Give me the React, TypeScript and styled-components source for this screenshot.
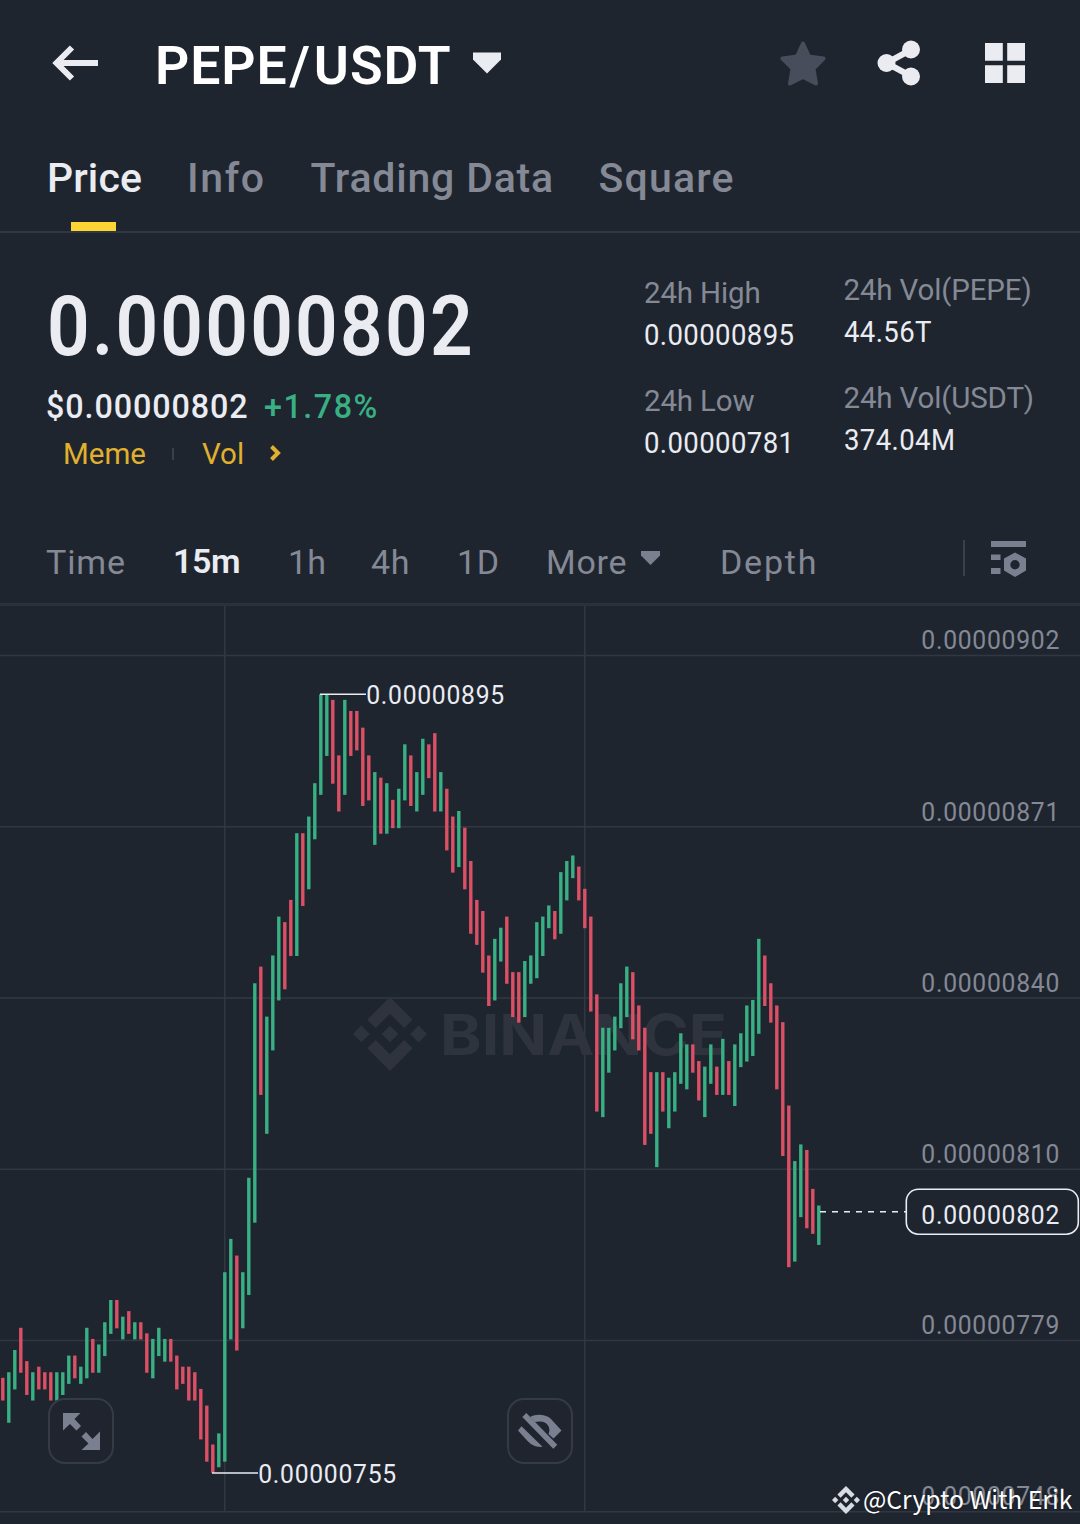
import React from 'react';
import styled, { createGlobalStyle } from 'styled-components';

const color = {
  bg: '#1f252f',
  line: '#323843',
  text: '#eaecf2',
  muted: '#848995',
  icon: '#7a808f',
  yellow: '#fcd535',
  gold: '#e0b02e',
  up: '#39b084',
  down: '#dc5066',
};

const GlobalStyle = createGlobalStyle`
  body {
    margin: 0;
    background: ${color.bg};
    font-family: Roboto, "Liberation Sans", sans-serif;
  }
`;

const Screen = styled.main`
  position: relative;
  width: 1080px;
  height: 1524px;
  overflow: hidden;
  background: ${color.bg};
  color: ${color.text};
`;

const Header = styled.header`
  display: flex;
  align-items: center;
  box-sizing: border-box;
  height: 126px;
  padding: 0 55px 0 52px;
`;

const Pair = styled.h1`
  width: 318px;
  margin: 5px 0 0 57px;
  font-size: 53.5px;
  line-height: 60px;
  font-weight: 600;
  letter-spacing: 0.9px;
  color: #fff;
  white-space: nowrap;
`;

const Slash = styled.span`
  margin: 0 3px 0 2px;
`;

const HeaderActions = styled.div`
  display: flex;
  align-items: center;
  margin-left: auto;
`;

const Star = styled.svg`
  margin-right: 51px;
`;

const Share = styled.svg`
  margin-right: 64px;
`;

const Tabs = styled.nav`
  display: flex;
  height: 105px;
  padding-left: 47px;
  border-bottom: 2px solid ${color.line};
`;

const Tab = styled.div<{ $active?: boolean; $width: number; $ls: number }>`
  display: flex;
  flex-direction: column;
  justify-content: space-between;
  box-sizing: border-box;
  width: ${(p) => p.$width}px;
  height: 105px;
  padding-top: 31px;
  font-size: 41px;
  line-height: 42px;
  font-weight: 500;
  letter-spacing: ${(p) => p.$ls}px;
  white-space: nowrap;
  color: ${(p) => (p.$active ? color.text : color.muted)};
`;

const Underline = styled.i`
  width: 45px;
  height: 9px;
  margin-left: 24px;
  background: ${color.yellow};
`;

const Summary = styled.section`
  display: flex;
  height: 286px;
`;

const PriceColumn = styled.div`
  box-sizing: border-box;
  width: 644px;
  padding: 49px 0 0 46px;
`;

/* Figures are set slightly condensed, with the tracking opened up to compensate. */
const Figure = styled.span<{ $ls: number; $squeeze?: number }>`
  display: inline-block;
  transform: scaleX(${(p) => p.$squeeze ?? 0.95});
  transform-origin: left center;
  letter-spacing: ${(p) => p.$ls}px;
  white-space: nowrap;
`;

const BigPrice = styled.div`
  height: 90px;
  padding-left: 1px;
  font-size: 83px;
  line-height: 90px;
  font-weight: 600;
`;

const SubPrice = styled.div`
  display: flex;
  height: 40px;
  margin-top: 15px;
  font-size: 34px;
  line-height: 39px;
  font-weight: 500;
`;

const Fiat = styled.span`
  width: 218px;
`;

const Change = styled.span`
  color: ${color.up};
`;

const TagRow = styled.div`
  display: flex;
  align-items: center;
  height: 36px;
  margin-top: 9px;
  padding-left: 17px;
  font-size: 29.5px;
  line-height: 36px;
  color: ${color.gold};
`;

const Tag = styled.span<{ $width: number }>`
  width: ${(p) => p.$width}px;
`;

const TagDivider = styled.i`
  width: 2px;
  height: 12px;
  margin: 0 28px 0 27px;
  background: #3a404b;
`;

const Chevron = styled.svg`
  margin-left: 24px;
`;

const StatColumn = styled.dl<{ $top: number; $width: number }>`
  width: ${(p) => p.$width}px;
  margin: ${(p) => p.$top}px 0 0;
`;

const StatLabel = styled.dt`
  font-size: 29.5px;
  line-height: 36px;
  letter-spacing: -0.15px;
  white-space: nowrap;
  color: ${color.muted};
`;

const StatValue = styled.dd`
  height: 36px;
  margin: 6px 0 30px;
  font-size: 29px;
  line-height: 36px;
`;

const Intervals = styled.nav`
  display: flex;
  align-items: center;
  height: 84px;
  padding-left: 46px;
  border-bottom: 3px solid #2b313b;
`;

const Interval = styled.span<{ $width: number; $active?: boolean; $ls?: number }>`
  display: flex;
  align-items: center;
  width: ${(p) => p.$width}px;
  height: 40px;
  padding-top: ${(p) => (p.$active ? 0 : 1)}px;
  font-size: 34px;
  line-height: 40px;
  font-weight: ${(p) => (p.$active ? 600 : 400)};
  letter-spacing: ${(p) => p.$ls ?? 0.7}px;
  color: ${(p) => (p.$active ? color.text : color.muted)};
`;

const SmallCaret = styled.svg`
  margin: -8px 0 0 14px;
`;

const IntervalDivider = styled.i`
  width: 2px;
  height: 36px;
  margin: -6px 26px 0 0;
  background: #3a404b;
`;

const SettingsIcon = styled.svg`
  margin-top: -4px;
`;

const ChartArea = styled.section`
  position: relative;
  height: 918px;
`;

const ChartSvg = styled.svg`
  display: block;
  font-family: Roboto, "Liberation Sans", sans-serif;
  font-size: 26.3px;
`;

const ChartButton = styled.button<{ $left: number }>`
  position: absolute;
  left: ${(p) => p.$left}px;
  top: 792px;
  display: flex;
  align-items: center;
  justify-content: center;
  width: 66px;
  height: 66px;
  padding: 0;
  border: 2.5px solid #353b46;
  border-radius: 17px;
  background: rgba(31, 37, 47, 0.9);
`;

const Credit = styled.div`
  position: absolute;
  left: 832px;
  bottom: 6px;
  display: flex;
  align-items: center;
  gap: 3px;
  height: 36px;
  font-family: "Noto Sans CJK SC", "Noto Sans", sans-serif;
  font-size: 24.7px;
  line-height: 32px;
  color: #fff;
  white-space: nowrap;
  text-shadow: 0 0 2px rgba(0, 0, 0, 0.45);
`;

const CreditName = styled.span`
  height: 36px;
`;

/* Each entry: direction (u/d), then high and low as ticks below the day's peak. */
const SERIES = `
d123,127 u122,131 u118,125 d114,122 d120,126 u122,127 d121,125 d122,125 d122,127 u122,127
u122,126 u119,124 d119,123 u121,124 u114,123 d116,122 u117,122 u113,119 u109,115 d109,114
u112,116 d111,115 u113,116 d113,116 d115,122 u116,123 u114,119 u116,120 d116,120 d119,125
d121,124 d121,127 d122,127 d125,134 d128,138 d135,140 u133,139 u104,138 u98,116 d101,118
u104,114 u87,108 u52,95 d49,72 u58,79 u47,64 u40,55 d41,53 d37,47 u25,47
d25,38 u22,35 u16,26 u0,18 u0,11 d1,16 d11,21 u1,18 d3,11 d3,10
d6,20 d11,19 u14,27 d15,25 u16,25 d19,24 u17,24 u9,19 d11,20 u14,21
u8,18 d9,15 d7,21 u14,21 d17,28 d22,32 u21,31 d24,35 d30,43 d37,45
d39,50 d47,56 u44,55 u42,48 d40,52 d50,58 d50,59 u48,58 u47,52 u41,51
u40,47 u38,42 d39,44 u32,43 u30,37 u29,33 d31,37 d35,42 d40,57 d54,75
u60,76 u60,68 u58,64 u52,60 u49,58 d50,62 d56,64 d60,81 d68,79 u68,85
d68,75 u69,78 u68,75 u61,70 u63,71 d63,68 d66,73 u67,76 u63,70 d67,72
u62,72 d66,72 u63,74 u61,67 u56,66 u55,65 u44,61 d47,56 d52,59 d56,71
d59,83 d74,103 u84,102 u81,94 d82,96 d89,97 u92,99
`;

const TICK = 5.557;
const PEAK_Y = 694.3;

const candles = SERIES.trim()
  .split(/\s+/)
  .map((entry, index) => {
    const [high, low] = entry.slice(1).split(',').map(Number);
    return {
      x: 2.8 + index * 6,
      top: PEAK_Y + high * TICK,
      bottom: PEAK_Y + low * TICK + 0.5,
      up: entry[0] === 'u',
    };
  });

const axis = ['0.00000902', '0.00000871', '0.00000840', '0.00000810', '0.00000779', '0.00000748'];

const BinanceMark = ({ size, fill }: { size: number; fill: string }) => (
  <svg width={size} height={size} viewBox="0 0 24 24" fill={fill}>
    <path d="M16.624 13.9202l2.7175 2.7154-7.353 7.353-7.353-7.352 2.7175-2.7164 4.6355 4.6595 4.6356-4.6595zm4.6366-4.6366L24 12l-2.7154 2.7164L18.5682 12l2.6924-2.7164zm-9.272.001l2.7163 2.6914-2.7164 2.7174v-.001L9.2721 12l2.7164-2.7154zm-9.2722-.001L5.4088 12l-2.6914 2.6924L0 12l2.7164-2.7164zM11.9885.0115l7.353 7.329-2.7174 2.7154-4.6356-4.6356-4.6355 4.6595-2.7174-2.7154 7.353-7.353z" />
  </svg>
);

const ChartFigure = ({ x, y, children }: { x: number; y: number; children: string }) => (
  <text transform={`translate(${x} ${y}) scale(0.94 1)`} textLength={138 / 0.94}>
    {children}
  </text>
);

const Chart = () => (
  <ChartSvg width="1080" height="918" viewBox="0 606 1080 918">
    <g stroke={color.line} strokeWidth="1.5">
      {axis.map((label, i) => (
        <line key={label} x1="0" x2="1080" y1={655.5 + i * 171.25} y2={655.5 + i * 171.25} />
      ))}
      <line x1="224.7" x2="224.7" y1="606" y2="1512" />
      <line x1="584.7" x2="584.7" y1="606" y2="1512" />
    </g>
    <g>
      <svg x="353" y="997" width="74" height="74" viewBox="0 0 74 74">
        <BinanceMark size={74} fill="#2e333d" />
      </svg>
      <text
        x="440"
        y="1054.5"
        fontFamily="Inter, sans-serif"
        fontWeight="700"
        fontSize="56"
        textLength="287"
        lengthAdjust="spacingAndGlyphs"
        fill="#2e333d"
      >
        BINANCE
      </text>
    </g>
    <g fill={color.muted}>
      {axis.map((label, i) => (
        <ChartFigure key={label} x={921.3} y={649.3 + i * 171.2}>
          {label}
        </ChartFigure>
      ))}
    </g>
    {candles.map((c) => (
      <rect
        key={c.x}
        x={c.x - 1.7}
        y={c.top}
        width="3.4"
        height={c.bottom - c.top}
        fill={c.up ? color.up : color.down}
      />
    ))}
    <g stroke={color.text} strokeWidth="1.6" fill="none">
      <path d="M320 694.3H366M212 1473H258" />
      <path d="M820 1211.7H906" strokeDasharray="6 6" />
      <rect x="906.3" y="1189.2" width="172" height="45" rx="12" fill={color.bg} />
    </g>
    <g fill={color.text}>
      <ChartFigure x={366.2} y={704.3}>0.00000895</ChartFigure>
      <ChartFigure x={258.2} y={1483.3}>0.00000755</ChartFigure>
      <ChartFigure x={921.3} y={1224.3}>0.00000802</ChartFigure>
    </g>
  </ChartSvg>
);

export default function App() {
  return (
    <Screen>
      <GlobalStyle />
      <Header>
        <svg width="46" height="36" viewBox="0 0 46 36" fill="none" stroke={color.text} strokeWidth="6">
          <path d="M4 18H46M20 2.5L4.5 18L20 33.5" />
        </svg>
        <Pair>
          PEPE<Slash>/</Slash>USDT
        </Pair>
        <svg width="28" height="22" viewBox="0 0 28 22" fill={color.text}>
          <path d="M0 .5H28V7.5L14 21.5L0 7.5Z" />
        </svg>
        <HeaderActions>
          <Star width="46" height="46" viewBox="0 0 46 46" fill="#474d5a" stroke="#474d5a" strokeWidth="4" strokeLinejoin="round">
            <path d="M23 3.5L29 16.5L43.5 18.5L33.5 28.5L36 43.5L23 37L10 43.5L12.5 28.5L2.5 18.5L17 16.5Z" />
          </Star>
          <Share width="44" height="46" viewBox="0 0 44 46" fill={color.text}>
            <path d="M34.500 9.500L9.500 23L34.500 36.500" fill="none" stroke={color.text} strokeWidth="6" />
            <circle cx="34" cy="9.500" r="9" />
            <circle cx="9.500" cy="23" r="9" />
            <circle cx="34" cy="36.500" r="9" />
          </Share>
          <svg width="40" height="40" viewBox="0 0 40 40" fill={color.text}>
            <path d="M0 0h17.800v17.800H0zM22.200 0H40v17.800H22.200zM0 22.200h17.800V40H0zM22.200 22.200H40V40H22.200z" />
          </svg>
        </HeaderActions>
      </Header>

      <Tabs>
        <Tab $active $width={140} $ls={0.1}>
          Price
          <Underline />
        </Tab>
        <Tab $width={123.500} $ls={1.6}>Info</Tab>
        <Tab $width={288} $ls={0.8}>Trading Data</Tab>
        <Tab $width={140} $ls={1.2}>Square</Tab>
      </Tabs>

      <Summary>
        <PriceColumn>
          <BigPrice>
            <Figure $ls={2.5} $squeeze={0.9}>0.00000802</Figure>
          </BigPrice>
          <SubPrice>
            <Fiat>
              <Figure $ls={0.95}>$0.00000802</Figure>
            </Fiat>
            <Change>
              <Figure $ls={1.6}>+1.78%</Figure>
            </Change>
          </SubPrice>
          <TagRow>
            <Tag $width={82}>Meme</Tag>
            <TagDivider />
            <Tag $width={43}>Vol</Tag>
            <Chevron width="13" height="18" viewBox="0 0 13 18" fill="none" stroke={color.gold} strokeWidth="4">
              <path d="M2.500 1.500L9 8L2.500 14.500" />
            </Chevron>
          </TagRow>
        </PriceColumn>
        <StatColumn $top={42} $width={199.500}>
          <StatLabel>24h High</StatLabel>
          <StatValue><Figure $ls={0.4}>0.00000895</Figure></StatValue>
          <StatLabel>24h Low</StatLabel>
          <StatValue><Figure $ls={0.4}>0.00000781</Figure></StatValue>
        </StatColumn>
        <StatColumn $top={39} $width={200}>
          <StatLabel>24h Vol(PEPE)</StatLabel>
          <StatValue><Figure $ls={0.4}>44.56T</Figure></StatValue>
          <StatLabel>24h Vol(USDT)</StatLabel>
          <StatValue><Figure $ls={0.4}>374.04M</Figure></StatValue>
        </StatColumn>
      </Summary>

      <Intervals>
        <Interval $width={127} $ls={0.9}>Time</Interval>
        <Interval $width={115} $active $ls={-0.4}>15m</Interval>
        <Interval $width={83} $ls={0.2}>1h</Interval>
        <Interval $width={86}>4h</Interval>
        <Interval $width={89}>1D</Interval>
        <Interval $width={174}>
          More
          <SmallCaret width="19" height="14" viewBox="0 0 19 14" fill={color.icon}>
            <path d="M0 0H19V4.500L9.500 14L0 4.500Z" />
          </SmallCaret>
        </Interval>
        <Interval $width={243} $ls={1.8}>Depth</Interval>
        <IntervalDivider />
        <SettingsIcon width="36" height="38" viewBox="0 0 36 38" fill={color.icon}>
          <path d="M0 1H35V7H0zM0 14.500H9.500V20H0zM0 28H9.500V34H0z" />
          <path fillRule="evenodd" d="M24 12.500L35 18.500V30.500L24 37L13 30.500V18.500ZM24 20a4.700 4.700 0 1 0 0 9.400a4.700 4.700 0 1 0 0-9.400Z" />
        </SettingsIcon>
      </Intervals>

      <ChartArea>
        <Chart />
        <ChartButton $left={48} aria-label="Expand chart">
          <svg width="37" height="37" viewBox="0 0 37 37" fill={color.icon}>
            <path d="M0 0H17.500L11.500 6L18 13L13.500 17.500L7 11L0 17.500Z" />
            <path d="M37 37H18.500L25.500 30.500L18.500 23.500L23 19L29.500 26L37 18.500Z" />
          </svg>
        </ChartButton>
        <ChartButton $left={507} aria-label="Hide orders">
          <svg width="44" height="36" viewBox="0 0 44 36" fill={color.icon}>
            <path d="M4.300 4L8.300 0L39.300 31.700L35.300 35.700Z" />
            <path d="M12 4C18 .8 27 1 32.500 5.500L43.500 17.500L35.500 25.500L30.500 21C33.500 14.500 29 8 21 8.500L17 9Z" />
            <path d="M3.500 13.300L24.500 33.800C18 34.500 13.500 32 10 28.500L0 17.500Z" />
          </svg>
        </ChartButton>
      </ChartArea>

      <Credit>
        <BinanceMark size={28} fill="#d9dbe2" />
        <CreditName>@Crypto With Erik</CreditName>
      </Credit>
    </Screen>
  );
}
